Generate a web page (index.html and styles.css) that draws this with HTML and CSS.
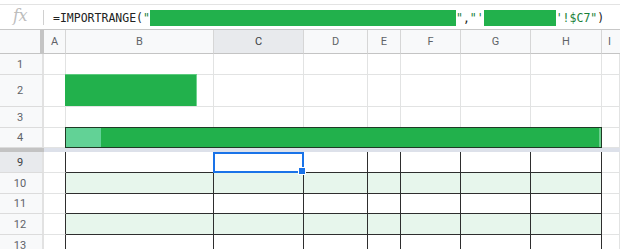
FILE: index.html
```html
<!DOCTYPE html>
<html>
<head>
<meta charset="utf-8">
<link rel="stylesheet" href="styles.css">
</head>
<body>
<div class="topline"></div>
<div class="formula-bar">
  <div class="fx">fx</div>
  <div class="fsep"></div>
  <div class="ftext"><span class="op">=IMPORTRANGE(</span><span class="str">"</span><span class="redact r1"></span><span class="str">"</span><span class="op">,</span><span class="str">"'</span><span class="redact r2"></span><span class="str">'!$C7"</span><span class="op">)</span></div>
</div>
<div class="sheet">
  <div class="row hdr">
    <div class="corner"></div>
    <div class="ch">A</div><div class="ch">B</div><div class="ch sel">C</div><div class="ch">D</div><div class="ch">E</div><div class="ch">F</div><div class="ch">G</div><div class="ch">H</div><div class="ch last">I</div>
  </div>
  <div class="row h21">
    <div class="rh">1</div>
    <div class="c"></div><div class="c"></div><div class="c"></div><div class="c"></div><div class="c"></div><div class="c"></div><div class="c"></div><div class="c"></div><div class="c"></div>
  </div>
  <div class="row h32">
    <div class="rh">2</div>
    <div class="c"></div><div class="c anchor"><div class="image-block"></div></div><div class="c"></div><div class="c"></div><div class="c"></div><div class="c"></div><div class="c"></div><div class="c"></div><div class="c"></div>
  </div>
  <div class="row h21">
    <div class="rh">3</div>
    <div class="c"></div><div class="c"></div><div class="c"></div><div class="c"></div><div class="c"></div><div class="c"></div><div class="c"></div><div class="c"></div><div class="c"></div>
  </div>
  <div class="row h20">
    <div class="rh">4</div>
    <div class="c"></div>
    <div class="merged"><div class="bar-light"></div><div class="bar-main"></div><div class="bar-end"></div></div>
    <div class="c"></div>
  </div>
  <div class="divider"><div class="div-rh"></div><div class="div-cells"></div></div>
  <div class="row h21 t">
    <div class="rh sel">9</div>
    <div class="c ta"></div><div class="c tb"></div><div class="c tb anchor"><div class="selection"></div><div class="handle"></div></div><div class="c tb"></div><div class="c tb"></div><div class="c tb"></div><div class="c tb"></div><div class="c tb"></div><div class="c"></div>
  </div>
  <div class="row h21 t band">
    <div class="rh">10</div>
    <div class="c ta"></div><div class="c tb"></div><div class="c tb"></div><div class="c tb"></div><div class="c tb"></div><div class="c tb"></div><div class="c tb"></div><div class="c tb"></div><div class="c"></div>
  </div>
  <div class="row h20 t">
    <div class="rh">11</div>
    <div class="c ta"></div><div class="c tb"></div><div class="c tb"></div><div class="c tb"></div><div class="c tb"></div><div class="c tb"></div><div class="c tb"></div><div class="c tb"></div><div class="c"></div>
  </div>
  <div class="row h21 t band">
    <div class="rh">12</div>
    <div class="c ta"></div><div class="c tb"></div><div class="c tb"></div><div class="c tb"></div><div class="c tb"></div><div class="c tb"></div><div class="c tb"></div><div class="c tb"></div><div class="c"></div>
  </div>
  <div class="row h21 t">
    <div class="rh">13</div>
    <div class="c ta"></div><div class="c tb"></div><div class="c tb"></div><div class="c tb"></div><div class="c tb"></div><div class="c tb"></div><div class="c tb"></div><div class="c tb"></div><div class="c"></div>
  </div>
</div>
</body>
</html>
```

FILE: styles.css
```css
* { box-sizing: border-box; }
html, body {
  margin: 0;
  padding: 0;
  width: 620px;
  height: 249px;
  overflow: hidden;
  background: #fff;
  font-family: Roboto, "Liberation Sans", Arial, sans-serif;
}
.topline {
  height: 5px;
  border-bottom: 1px solid #e3e3e3;
}
.formula-bar {
  height: 25px;
  display: flex;
  align-items: center;
  border-bottom: 1px solid #c7c7c7;
}
.fx {
  width: 43px;
  padding-left: 13px;
  font-family: "DejaVu Serif", "Liberation Serif", serif;
  font-style: italic;
  font-size: 16px;
  color: #bdbdbd;
  line-height: 16px;
  letter-spacing: -0.5px;
  padding-bottom: 2px;
}
.fsep {
  width: 1px;
  height: 15px;
  background: #d0d0d0;
  margin-right: 9px;
}
.ftext {
  display: flex;
  align-items: center;
  font-family: "DejaVu Sans Mono", "Liberation Mono", monospace;
  font-size: 11.5px;
  white-space: pre;
  color: #222;
  line-height: 16px;
  padding-top: 1px;
}
.str { color: #188038; }
.redact {
  display: inline-block;
  height: 16px;
  background: #22b14c;
}
.redact.r1 { width: 306px; }
.redact.r2 { width: 72px; }

.sheet { display: flex; flex-direction: column; }
.row {
  display: grid;
  grid-template-columns: 44px 22px 148px 90px 64px 33px 60px 70px 71px 1fr;
}
.hdr { height: 24px; }
.h20 { height: 20px; }
.h21 { height: 21px; }
.h32 { height: 32px; }

.corner {
  background: #f8f9fa;
  border-right: 4px solid #c4c4c4;
  border-bottom: 1px solid #c4c4c4;
}
.ch {
  background: #f8f9fa;
  border-right: 1px solid #d6d6d6;
  border-bottom: 1px solid #c4c4c4;
  color: #5f6368;
  font-size: 11px;
  display: flex;
  align-items: center;
  justify-content: center;
}
.ch.sel { background: #e8eaed; color: #3c4043; }
.ch.last { border-right: none; justify-content: flex-start; padding-left: 6px; }

.rh {
  background: #f8f9fa;
  border-right: 2px solid #e2e2e2;
  border-bottom: 1px solid #dcdcdc;
  color: #5f6368;
  font-size: 11px;
  display: flex;
  align-items: center;
  justify-content: center;
  padding-right: 2px;
}
.rh.sel { background: #e8eaed; color: #3c4043; }
.c {
  border-right: 1px solid #e2e3e3;
  border-bottom: 1px solid #e2e3e3;
  background: #fff;
}
.anchor { position: relative; }
.image-block {
  position: absolute;
  top: -1px;
  left: -1px;
  width: 132px;
  height: 32px;
  background: #22b14c;
  border-top: 1px solid #5ccb7e;
  border-right: 1px solid #6fd38f;
}
.merged {
  grid-column: 3 / 10;
  margin-top: -1px;
  margin-left: -1px;
  border: 1px solid #1f3a25;
  display: flex;
}
.bar-light { width: 35px; background: #62d296; }
.bar-main { flex: 1; background: #22b14c; }
.bar-end { width: 2px; background: #6ccf8e; }

.divider { display: flex; height: 4px; }
.div-rh { width: 44px; background: #c3c3c3; }
.div-cells { flex: 1; background: #dde1ea; }

.t .ta { border-right-color: #2e2e2e; }
.t .tb { border-right-color: #2e2e2e; border-bottom-color: #2e2e2e; }
.band .tb { background: #e7f6ec; }

.selection {
  position: absolute;
  top: 0;
  left: -1px;
  width: 91px;
  height: 21px;
  border: 2px solid #1a73e8;
  z-index: 2;
}
.handle {
  position: absolute;
  left: 84px;
  top: 15px;
  width: 8px;
  height: 8px;
  background: #1a73e8;
  border: 1px solid #fff;
  z-index: 3;
}
```
